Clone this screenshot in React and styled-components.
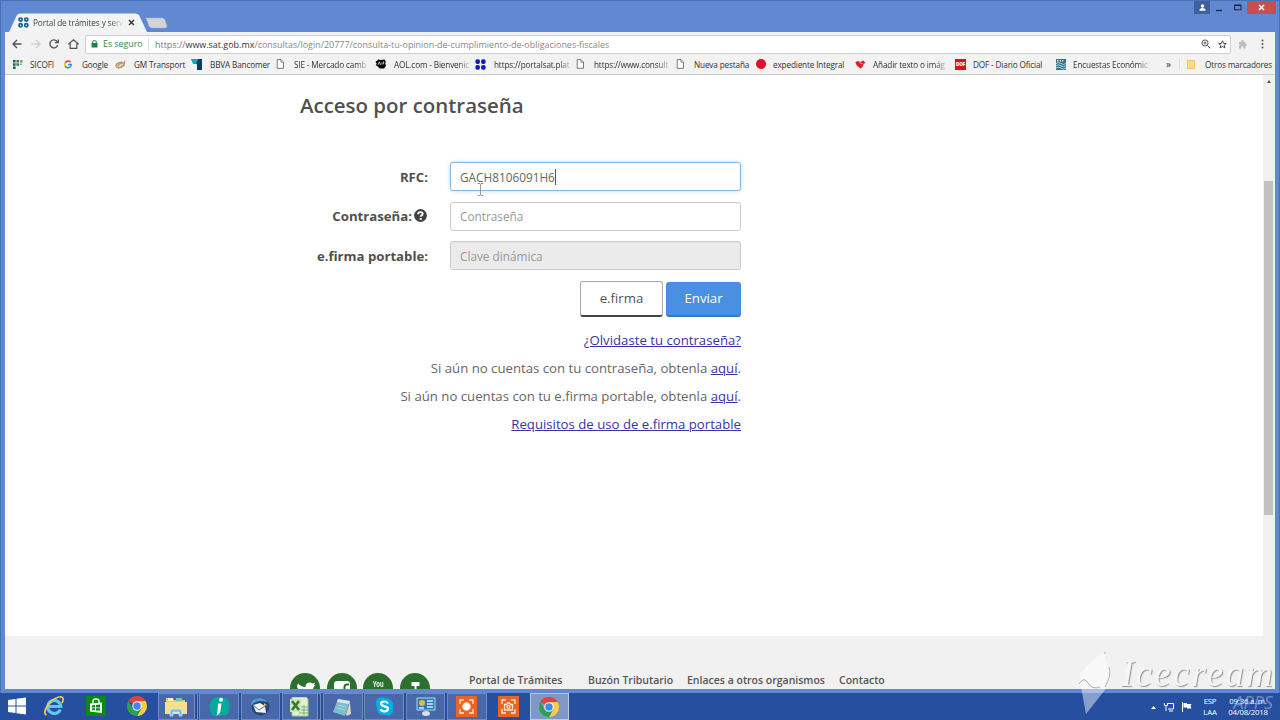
import React from "react";
import styled, { createGlobalStyle, css } from "styled-components";

const GlobalStyle = createGlobalStyle`
  * {
    box-sizing: border-box;
  }

  body {
    margin: 0;
    font-family: "Open Sans", sans-serif;
    overflow: hidden;
  }
`;

const DotsIcon = () => (
  <svg width="11" height="11" viewBox="0 0 12 12" fill="#1717c4">
    <rect x="0.4" y="0.4" width="5" height="5" rx="2" />
    <rect x="6.6" y="0.4" width="5" height="5" rx="2" />
    <rect x="0.4" y="6.6" width="5" height="5" rx="2" />
    <rect x="6.6" y="6.6" width="5" height="5" rx="2" />
  </svg>
);

const SatIcon = () => (
  <svg width="11" height="11" viewBox="0 0 11 11" fill="none" stroke="#1c5f8e" strokeWidth="1.7">
    <circle cx="2.6" cy="2.6" r="1.6" />
    <circle cx="8.3" cy="2.6" r="1.6" />
    <circle cx="2.6" cy="8.3" r="1.6" />
    <circle cx="8.3" cy="8.3" r="1.6" />
  </svg>
);

const PageIcon = () => (
  <svg width="9" height="10" viewBox="0 0 9 10" fill="#fff" stroke="#6b6b6b" strokeWidth="0.9">
    <path d="M1.2.6h3.8l2.5 2.5v6.2H1.2z" />
    <path d="M5 .6v2.5h2.5" />
  </svg>
);

const GoogleIcon = () => (
  <svg width="8" height="9" viewBox="0 0 10 10" fill="none" strokeWidth="2">
    <path d="M8.2 2.1A4 4 0 0 0 1.5 3.1" stroke="#ea4335" />
    <path d="M1.5 3.1a4 4 0 0 0 0 3.8" stroke="#fbbc05" />
    <path d="M1.5 6.9A4 4 0 0 0 7.8 7.9" stroke="#34a853" />
    <path d="M7.8 7.9A4 4 0 0 0 9 5H5" stroke="#4285f4" />
  </svg>
);

const SicofiIcon = () => (
  <svg width="10" height="9" viewBox="0 0 10 9">
    <path d="M0 0h2.6v2.6H0zM0 3.2h2.6v2.6H0zM0 6.4h2.6V9H0z" fill="#1d6444" />
    <path d="M3.4 0H6v2.6H3.4zM3.4 3.2H6v2.6H3.4z" fill="#2e8058" />
    <path d="M7.2.2h2.2v2.2H7.2zM7.2 3.6h1.4V5H7.2z" fill="#4b8f70" />
  </svg>
);

const GmIcon = () => (
  <svg width="11" height="9" viewBox="0 0 11 9" fill="none" stroke="#b59a61" strokeWidth="1.1">
    <ellipse cx="5" cy="5" rx="4.2" ry="2.6" transform="rotate(-18 5 5)" fill="#ddd3ba" />
    <path d="M2.6 6.2c1-2.8 3.4-3.3 5-2.8M3 7.8c4 .4 7-3 6.8-7" />
  </svg>
);

const BbvaIcon = () => (
  <svg width="11" height="11" viewBox="0 0 11 11">
    <path d="M0 0h11v11H6V5.4z" fill="#093e63" />
    <path d="M0 0h7L5 5H2z" fill="#1aa7b5" />
  </svg>
);

const AolIcon = () => (
  <svg width="12" height="10" viewBox="0 0 12 10">
    <path d="M.5 3 2 1.8 3.2.5l3 .6L9.6.6l1.2 2.2-.6 2 .9 1.8L9 9.5H4.6L2.6 7.2.7 6.3l1-1.6z" fill="#080808" />
    <path d="m3 5.8 1.4-3 1.2 3M7 3.3v2.4M8.6 2.4v2.8" stroke="#eee" strokeWidth=".8" fill="none" />
  </svg>
);

const ImageTextIcon = () => (
  <svg width="11" height="9" viewBox="0 0 11 9">
    <path d="M.3 2.3 3 1l2 1.1L8.3.4l2.4 2.7-2 .7-.9 2.7-2.3 2.1L1.9 5.8z" fill="#dd2027" />
    <path d="m4.8 2 .8 1.5 2.2.2" stroke="#fff" strokeWidth=".6" fill="none" />
  </svg>
);

const SurveyIcon = () => (
  <svg width="10" height="11" viewBox="0 0 10 11">
    <path d="M0 0h10v11H0z" fill="#39708a" />
    <path d="M1 1h1.5v1.5H1zM3.6 1H5v1.5H3.6zM6 1h1.4v1.5H6z" fill="#d7e5e8" />
    <path d="M0 4.5q2.5-2 5 0t5 0M0 6.8q2.5-2 5 0t5 0M0 9.1q2.5-2 5 0t5 0" stroke="#b3d5da" fill="none" />
  </svg>
);

const ChromeIcon = () => (
  <svg width="20" height="20" viewBox="0 0 20 20">
    <path d="M10 10 1.34 5A10 10 0 0 1 18.66 5z" fill="#dc4537" />
    <path d="M10 10V5h8.66A10 10 0 0 1 10 20l4.3-7.5z" fill="#fccd43" />
    <path d="M10 10l4.33 2.5L10 20A10 10 0 0 1 1.34 5l4.33 7.5z" fill="#2ba14b" />
    <circle cx="10" cy="10" r="4.8" fill="#f6f6f6" />
    <circle cx="10" cy="10" r="3.7" fill="#4285f4" />
  </svg>
);

const bookmarks = [
  { label: "SICOFI", width: 50.5, gap: 7, icon: <SicofiIcon /> },
  { label: "Google", width: 52.5, gap: 8.5, icon: <GoogleIcon /> },
  { label: "GM Transport", width: 76, icon: <GmIcon /> },
  { label: "BBVA Bancomer", width: 84, icon: <BbvaIcon /> },
  { label: "SIE - Mercado camb", width: 100, fade: true, icon: <PageIcon /> },
  { label: "AOL.com - Bienvenic", width: 100, fade: true, icon: <AolIcon /> },
  { label: "https://portalsat.plat", width: 100, fade: true, icon: <DotsIcon /> },
  { label: "https://www.consult", width: 100, fade: true, icon: <PageIcon /> },
  { label: "Nueva pestaña", width: 80, icon: <PageIcon /> },
  { label: "expediente Integral", width: 100, gap: 7, icon: "record" },
  { label: "Añadir texto o imág", width: 100, gap: 7, fade: true, icon: <ImageTextIcon /> },
  { label: "DOF - Diario Oficial", width: 100, gap: 7, icon: "dof" },
  { label: "Encuestas Económic", width: 106, gap: 7, fade: true, icon: <SurveyIcon /> },
];

const footerLinks = [
  ["Portal de Trámites", 119],
  ["Buzón Tributario", 99],
  ["Enlaces a otros organismos", 152],
  ["Contacto", 60],
];

const Browser = () => (
  <>
    <TabStrip>
      <Tab>
        <TabShape viewBox="0 0 139 19" preserveAspectRatio="none">
          <path d="M0 19 8 2Q9 .5 11 .5H126Q129 .5 130 2L138 19z" fill="#f2f3f3" />
        </TabShape>
        <SatIcon />
        <TabTitle>Portal de trámites y servic</TabTitle>
        <svg width="7" height="7" viewBox="0 0 7 7" stroke="#333" strokeWidth="1.4">
          <path d="m1 1 5 5M6 1 1 6" />
        </svg>
      </Tab>
      <svg width="23" height="12" viewBox="0 0 23 12">
        <path d="M1 1h16q2 0 3 2l2 6q0 2-2 2H7q-2 0-3-2z" fill="#d1d3d6" stroke="#a4afc4" strokeWidth=".5" />
      </svg>
      <WindowControls>
        <Control $kind="user">
          <svg width="7" height="7" viewBox="0 0 8 8" fill="#fff">
            <circle cx="4" cy="2.3" r="2" />
            <path d="M.5 7.6V6.5Q1 4.7 4 4.7t3.5 1.8v1.1z" />
          </svg>
        </Control>
        <Control>
          <svg width="7" height="8">
            <path d="M0 6.5h6" stroke="#15213d" strokeWidth="1.3" />
          </svg>
        </Control>
        <Control>
          <svg width="8" height="7">
            <path d="M.5 1H7v4.8H.5zM.5 1.5H7" stroke="#15213d" fill="none" />
          </svg>
        </Control>
        <Control $kind="close">
          <svg width="7" height="7" viewBox="0 0 7 7" stroke="#fff" strokeWidth="1.5">
            <path d="m1 1 5 5M6 1 1 6" />
          </svg>
        </Control>
      </WindowControls>
    </TabStrip>
    <Toolbar>
      <NavIcons>
        <svg width="10" height="10" viewBox="0 0 10 10" stroke="#555" strokeWidth="1.4">
          <path d="M9.5 5H1M5 1 1 5l4 4" />
        </svg>
        <svg width="10" height="10" viewBox="0 0 10 10" stroke="#cfcfcf" strokeWidth="1.4">
          <path d="M.5 5H9M5 1l4 4-4 4" />
        </svg>
        <svg width="10" height="10" viewBox="0 0 10 10" stroke="#555" strokeWidth="1.3">
          <path d="M8.7 6.2A4 4 0 1 1 7.9 2.2L9 3.3" />
          <path d="M6 3.6h3.3V.4" />
        </svg>
        <svg width="11" height="10" viewBox="0 0 11 10" stroke="#555" strokeWidth="1.2">
          <path d="M.7 5 5.5.8 10.3 5H8.8v4.3H2.2V5z" />
        </svg>
      </NavIcons>
      <AddressBar>
        <svg width="7" height="8" viewBox="0 0 7 8">
          <path d="M.5 3h6v4.5h-6z" fill="#13854a" />
          <path d="M1.7 3V2a1.8 1.5 0 0 1 3.6 0v1" fill="none" stroke="#13854a" />
        </svg>
        <Secure>Es seguro</Secure>
        <Url>
          https://<b>www.sat.gob.mx</b>
          <span>/consultas/login/20777/consulta-tu-opinion-de-cumplimiento-de-obligaciones-fiscales</span>
        </Url>
        <svg width="10" height="10" viewBox="0 0 10 10" fill="none" stroke="#555">
          <circle cx="4" cy="4" r="3.1" />
          <path d="m6.3 6.3 3 3M2.5 4h3M4 2.5v3" />
        </svg>
        <svg width="9" height="9" viewBox="0 0 10 10" fill="none" stroke="#444" strokeWidth="1.1">
          <path d="m5 .9 1.2 2.8 3 .2-2.3 1.9.8 3L5 7.2 2.3 8.8l.8-3L.8 3.9l3-.2z" />
        </svg>
      </AddressBar>
      <ToolbarEnd>
        <svg width="9" height="9" viewBox="0 0 9 9" fill="#bdbdbd">
          <path d="M1 2h2.3V1a1.1 1.1 0 0 1 2.2 0v1h2v2.1h.4a1 1 0 0 1 0 2h-.4v2.4H5.2V7.3a1 1 0 0 0-2 0v1.2H1V6.2a1.2 1.2 0 0 0 0-2.2z" />
        </svg>
        <svg width="3" height="10" fill="#555">
          <circle cx="1.5" cy="1.5" r="1" />
          <circle cx="1.5" cy="5" r="1" />
          <circle cx="1.5" cy="8.5" r="1" />
        </svg>
      </ToolbarEnd>
    </Toolbar>
    <BookmarkBar>
      {bookmarks.map(({ label, width, gap, fade, icon }) => (
        <Bookmark key={label} $width={width} $gap={gap}>
          <BookmarkIcon>
            {icon === "record" ? <RecordIcon /> : icon === "dof" ? <DofIcon>DOF</DofIcon> : icon}
          </BookmarkIcon>
          <BookmarkText $fade={fade}>{label}</BookmarkText>
        </Bookmark>
      ))}
      <Overflow>»</Overflow>
      <OtherBookmarks>
        <Folder />
        Otros marcadores
      </OtherBookmarks>
    </BookmarkBar>
  </>
);

const AccessForm = () => (
  <FormArea>
    <Title>Acceso por contraseña</Title>
    <Fields>
      <Field>
        <Label>RFC:</Label>
        <Input $focused>
          GACH8106091H6
          <Caret />
          <MousePointer viewBox="0 0 7 13" fill="none" stroke="#999">
            <path d="M.5.5H3l.5.5.5-.5h2.5M3.5 1v11M.5 12.5H3l.5-.5.5.5h2.5" />
          </MousePointer>
        </Input>
      </Field>
      <Field>
        <Label $help>
          Contraseña:
          <svg width="13" height="13" viewBox="0 0 13 13">
            <circle cx="6.5" cy="6.5" r="6.4" fill="#414141" />
            <path d="M4.2 5.2V4.7Q4.4 3.1 6.5 3.1t2.2 1.7Q8.7 6 7.5 6.5q-.8.4-.8 1.3" fill="none" stroke="#fff" strokeWidth="1.9" />
            <path d="M5.7 9h2v1.9h-2z" fill="#fff" />
          </svg>
        </Label>
        <Input $placeholder>Contraseña</Input>
      </Field>
      <Field>
        <Label>e.firma portable:</Label>
        <Input $placeholder $disabled>Clave dinámica</Input>
      </Field>
    </Fields>
    <Actions>
      <Button type="button">e.firma</Button>
      <Button type="button" $primary>Enviar</Button>
    </Actions>
    <Help>
      <p><a>¿Olvidaste tu contraseña?</a></p>
      <p>Si aún no cuentas con tu contraseña, obtenla <a>aquí</a>.</p>
      <p>Si aún no cuentas con tu e.firma portable, obtenla <a>aquí</a>.</p>
      <p><a>Requisitos de uso de e.firma portable</a></p>
    </Help>
  </FormArea>
);

const PageFooter = () => (
  <Footer>
    <Social>
      <SocialCircle>
        <svg width="30" height="30" viewBox="0 0 30 30" fill="#fff">
          <path d="M8 10.5q3.5 3.5 7.5 3.5 0-4.5 4.5-4.5 1.5 0 2.5 1l2.5-.8-1 2.3 1.5.3-2 2q-1 9-9 10-5 0-8-2.5 4 0 5-1.5-3-.8-3.5-3h2q-3-1.500-3-4.200z" />
        </svg>
      </SocialCircle>
      <SocialCircle>
        <svg width="30" height="30" viewBox="0 0 30 30">
          <rect x="7" y="8" width="16" height="16" rx="3" fill="#fff" />
          <path d="M22 11.5h-2q-2.500 0-2.500 2.500v9m-2.500-6h6" stroke="#2b6d2c" strokeWidth="2" fill="none" />
        </svg>
      </SocialCircle>
      <SocialCircle><YouText>You</YouText></SocialCircle>
      <SocialCircle>
        <svg width="30" height="30" viewBox="0 0 30 30" fill="#fff">
          <path d="M11.5 9h8v4h-3v3h7v4h-2v-2h-12v2h-2v-4h7v-3h-3z" />
        </svg>
      </SocialCircle>
    </Social>
    {footerLinks.map(([label, width]) => (
      <FooterLink key={label} $width={width}>{label}</FooterLink>
    ))}
  </Footer>
);

const WindowsIcon = () => (
  <svg width="18" height="18" viewBox="0 0 18 18" fill="#fff">
    <path d="m0 3 7.5-1v6.5H0zM8.5 1.8 18 .5v8H8.5zM0 9.5h7.5V16L0 15zM8.5 9.5H18v8l-9.500-1.300z" />
  </svg>
);

const IeIcon = () => (
  <svg width="22" height="20" viewBox="0 0 22 20" fill="none">
    <path d="M17.3 13.5A6.5 6.5 0 1 1 17.8 10.5H6" stroke="#60c9f1" strokeWidth="3.2" />
    <path d="M3.5 19C-2 17 7 3 16 1c6-1 4 4 3 6" stroke="#efca4b" strokeWidth="1.7" />
  </svg>
);

const StoreIcon = () => (
  <svg width="20" height="20" viewBox="0 0 20 20">
    <path d="M0 0h20v20H0z" fill="#098b12" />
    <path d="m4 7.5 12-1v10.500L4 15.500z" fill="#fff" />
    <path d="M7 7V5q0-2 3-2t3 2v2" stroke="#fff" strokeWidth="1.4" fill="none" />
    <path d="m6 9.300 3-.3V11.500H6zM10 9l4-.5v3h-4zM6 12.300h3v2H6zM10 12.300h4v2.300h-4z" fill="#098b12" />
  </svg>
);

const FolderIcon = () => (
  <svg width="22" height="21" viewBox="0 0 22 21">
    <path d="M1 2h7l1 2h11v14H1z" fill="#edc95f" />
    <path d="M3 2h5v3H3z" fill="#fff4bd" />
    <path d="M11 2h6v3h-6z" fill="#7fc0b0" />
    <path d="M0 6h22v12H0z" fill="#f7e08d" />
    <path d="M5 20v-4q0-3 3-3h6q3 0 3 3v4h-3v-4H8v4z" fill="#72bfe7" stroke="#d9f0f7" strokeWidth=".7" />
  </svg>
);

const InfoIcon = () => (
  <svg width="21" height="21" viewBox="0 0 21 21">
    <path d="M2 5q4-5 10-4l7 2q3 8 0 15-8 4-16 1Q-1 12 2 5z" fill="#03a99b" />
    <circle cx="12" cy="3.8" r="2" fill="#fff" />
    <path d="M9 7.5h3.5l-1 7q-.5 3.500-4 5l1-4z" fill="#fff" />
  </svg>
);

const ThunderbirdIcon = () => (
  <svg width="20" height="20" viewBox="0 0 20 20">
    <circle cx="10.5" cy="9.5" r="9" fill="#244875" />
    <path d="M3 3q9-5 15 2-4-1-8-1-5 0-9 5 0-4 2-6z" fill="#4e9bd2" />
    <path d="m3 8 7-2 5 3 1 7-10-1z" fill="#f1f3f5" />
    <path d="m3 8 6 5 6-4" stroke="#7b6c66" fill="none" />
    <path d="m14 6 3 2-3 1z" fill="#e8b565" />
  </svg>
);

const ExcelIcon = () => (
  <svg width="21" height="20" viewBox="0 0 21 20">
    <path d="M3 0h14l2 2v17H3z" fill="#e2f1d4" stroke="#9cc48a" />
    <path d="M10 10h9m-9 3h9m-9 3h9M15 8v10" stroke="#7cad6c" />
    <path d="M1 2h11v13H1z" fill="#cfe6c0" />
    <path d="m3 4 7 9M10 4l-7 9" stroke="#2e7d38" strokeWidth="2.6" />
  </svg>
);

const NotesIcon = () => (
  <svg width="21" height="20" viewBox="0 0 21 20">
    <path d="m6 2 12 2-5 15-12-4z" fill="#7ebdce" />
    <path d="m6 2 12 2-1 3L5 5z" fill="#d8e8eb" />
    <path d="m14 17 4-12 1 12-4 2z" fill="#ded2c5" />
    <path d="m6 8 8 2m-9 1 8 2" stroke="#a5d4df" />
  </svg>
);

const SkypeIcon = () => (
  <svg width="19" height="19" viewBox="0 0 19 19">
    <path d="M5 .5q3-.5 5 .5 8 0 8 8 0 1.5-.3 2 1.3 3-.7 5.5-3 3-6 1.5-9 1-9.5-8 0-1-.3-1.5Q0 2 5 .5z" fill="#00aee9" />
    <path d="M13 6.5Q12 4.5 9.5 4.5q-3.5 0-3.5 2.3 0 1.9 3.5 2.500t3.500 2.500q0 2.500-3.500 2.500-3 0-4-2" fill="none" stroke="#fff" strokeWidth="2.2" />
  </svg>
);

const ControlIcon = () => (
  <svg width="20" height="19" viewBox="0 0 20 19">
    <path d="M1 1h18v12H1z" fill="#277abb" stroke="#b6d6e6" />
    <circle cx="6" cy="6" r="3" fill="#e8b44b" />
    <path d="M11 4h6M11 7h6M11 10h6M3 11h5" stroke="#d9eefa" strokeWidth="1.3" />
    <ellipse cx="10" cy="16.5" rx="4" ry="2.5" fill="#d9dfe2" />
  </svg>
);

const CaptureIcon = ({ camera }) => (
  <svg width="21" height="21" viewBox="0 0 21 21" fill="none" stroke="#ffe3cd" strokeWidth="1.3">
    <path d="M0 0h21v21H0z" fill="#e86625" stroke="none" />
    <path d="M4 8V4h4M13 4h4v4M17 13v4h-4M8 17H4v-4" />
    {camera ? (
      <>
        <path d="M6.5 8.5h2l1-1.5h2l1 1.5h2V14h-8z" />
        <circle cx="10.5" cy="11" r="1.5" />
      </>
    ) : (
      <circle cx="10.5" cy="10.5" r="3.6" fill="#fff" />
    )}
  </svg>
);

const tasks = [
  { icon: <FolderIcon />, framed: true, stacked: true },
  { icon: <InfoIcon />, framed: true },
  { icon: <ThunderbirdIcon />, framed: true },
  { icon: <ExcelIcon />, framed: true, stacked: true },
  { icon: <NotesIcon />, framed: true },
  { icon: <SkypeIcon />, framed: true },
  { icon: <ControlIcon />, framed: true },
  { icon: <CaptureIcon />, framed: true },
  { icon: <CaptureIcon camera /> },
  { icon: <ChromeIcon />, framed: true, active: true },
];

const Taskbar = () => (
  <TaskbarRow>
    <Launcher $width={33}><WindowsIcon /></Launcher>
    <Launcher $width={42}><IeIcon /></Launcher>
    <Launcher $width={41}><StoreIcon /></Launcher>
    <Launcher $width={42}><ChromeIcon /></Launcher>
    <TaskList>
      {tasks.map((task, index) => (
        <TaskButton key={index} $framed={task.framed} $stacked={task.stacked} $active={task.active}>
          {task.icon}
        </TaskButton>
      ))}
    </TaskList>
    <Tray>
      <svg width="5" height="3"><path d="m0 3 2.5-3L5 3z" fill="#fff" /></svg>
      <svg width="10" height="10" viewBox="0 0 10 10" fill="none" stroke="#fff">
        <path d="M4 1.5h5.5v5.5H4M5 9h4M.5 1v2.500h3V1M2 4v5" />
      </svg>
      <svg width="10" height="10" viewBox="0 0 10 10" fill="#fff">
        <path d="M0 0h1v10H0zM1.500 1H5v1h4.500L8.500 4l1 2.500H5V5.500H1.500z" />
      </svg>
      <TrayText $width={16}>ESP<br />LAA</TrayText>
      <TrayText $width={40}>09:36 a. m.<br />04/08/2018</TrayText>
    </Tray>
  </TaskbarRow>
);

const App = () => (
  <Desktop>
    <GlobalStyle />
    <Window>
      <Browser />
      <Viewport>
        <Page>
          <AccessForm />
          <PageFooter />
        </Page>
        <Scrollbar>
          <ScrollArrow />
          <ScrollThumb />
        </Scrollbar>
      </Viewport>
    </Window>
    <Taskbar />
    <Watermark>
      <svg width="36" height="64" viewBox="0 0 36 64">
        <path d="M1 30Q3 14 27 1q-1 7 4 14t-1 20L8 63 3 36z" fill="#fff" fillOpacity=".5" />
        <path d="M1 33q5-8 9-1t12 4M31 16q3 8-4 20M27 1v2" fill="none" stroke="#666" strokeWidth=".8" strokeOpacity=".7" />
      </svg>
      <Brand>
        <BrandName>Icecream</BrandName>
        <BrandApps>APPS</BrandApps>
      </Brand>
    </Watermark>
  </Desktop>
);

export default App;

// Styled components

const Desktop = styled.div`
  position: relative;
  display: flex;
  flex-direction: column;
  width: 1280px;
  height: 720px;
  overflow: hidden;
  background: #6189d2;

  svg {
    flex-shrink: 0;
  }
`;

const Window = styled.main`
  display: flex;
  flex-direction: column;
  height: 693px;
  padding: 0 4px 4px;
  border: 1px solid #4672b5;
  border-bottom: 0;
`;

const TabStrip = styled.div`
  display: flex;
  align-items: flex-end;
  height: 31px;
  flex-shrink: 0;
  padding-left: 4px;

  > svg {
    margin-bottom: 3px;
  }
`;

const Tab = styled.div`
  position: relative;
  display: flex;
  align-items: center;
  width: 136px;
  height: 19px;
  padding-left: 9px;
`;

const TabShape = styled.svg`
  position: absolute;
  inset: 0;
  width: 139px;
  height: 19px;

  ~ * {
    position: relative;
  }
`;

const TabTitle = styled.span`
  width: 90px;
  margin: 0 5px 0 4px;
  white-space: nowrap;
  font-size: 8.2px;
  color: #444;
  letter-spacing: -0.1px;
  mask-image: linear-gradient(to right, #000 85%, transparent 102%);
`;

const WindowControls = styled.div`
  display: flex;
  align-self: flex-start;
  height: 13px;
  margin-left: auto;
  margin-right: -1px;
`;

const controlWidths = { user: "16px", close: "29px" };
const controlColors = { user: "#3e609f", close: "#c84e50" };

const Control = styled.div`
  display: grid;
  place-items: center;
  width: ${({ $kind }) => controlWidths[$kind] || "18.5px"};
  background: ${({ $kind }) => controlColors[$kind] || "transparent"};
`;

const Toolbar = styled.div`
  display: flex;
  align-items: center;
  height: 24px;
  flex-shrink: 0;
  padding-left: 7px;
  background: #f2f2f2;
`;

const NavIcons = styled.div`
  display: flex;
  align-items: center;
  gap: 8.6px;
  width: 73px;
  fill: none;
`;

const AddressBar = styled.div`
  display: flex;
  align-items: center;
  width: 1146px;
  height: 19px;
  padding: 0 3px 0 5px;
  background: #fff;
  border: 1px solid #cfcfcf;
  border-radius: 2px;

  > svg:nth-last-child(2) {
    margin-left: auto;
    margin-right: 7px;
  }
`;

const Secure = styled.span`
  display: flex;
  align-items: center;
  height: 12px;
  width: 46px;
  margin-left: 5px;
  border-right: 1px solid #ddd;
  color: #328b48;
  font-size: 8.8px;
  white-space: nowrap;
`;

const Url = styled.span`
  margin-left: 6px;
  font-size: 8.95px;
  color: #777;
  white-space: nowrap;

  b {
    font-weight: 400;
    color: #333;
  }

  span {
    color: #888;
  }
`;

const ToolbarEnd = styled.div`
  display: flex;
  align-items: center;
  justify-content: space-between;
  width: 26px;
  margin-left: 7px;
`;

const BookmarkBar = styled.div`
  display: flex;
  align-items: center;
  height: 19px;
  flex-shrink: 0;
  padding: 0 0 2px 7px;
  background: #f2f2f2;
  border-bottom: 1px solid #c9c9c9;
  font-size: 8.2px;
  letter-spacing: -0.15px;
  color: #333;
`;

const Bookmark = styled.div`
  display: flex;
  align-items: center;
  gap: ${({ $gap = 8 }) => $gap}px;
  width: ${({ $width }) => $width}px;
  flex-shrink: 0;
`;

const BookmarkIcon = styled.span`
  display: flex;
  justify-content: center;
  width: 11px;
  flex-shrink: 0;
`;

const BookmarkText = styled.span`
  white-space: nowrap;
  ${({ $fade }) =>
    $fade &&
    css`
      mask-image: linear-gradient(to right, #000 86%, transparent 105%);
    `}
`;

const RecordIcon = styled.i`
  width: 10px;
  height: 10px;
  border-radius: 50%;
  background: #e50a25;
`;

const DofIcon = styled.span`
  width: 11px;
  height: 11px;
  background: #dd1117;
  color: #fff;
  font-size: 4.6px;
  font-weight: 800;
  line-height: 11px;
  text-align: center;
`;

const Overflow = styled.span`
  width: 18px;
  padding-left: 5px;
  font-size: 10px;
`;

const OtherBookmarks = styled.span`
  display: flex;
  align-items: center;
  height: 12px;
  gap: 10px;
  padding-left: 7px;
  border-left: 1px solid #ddd;
  white-space: nowrap;
`;

const Folder = styled.i`
  width: 8px;
  height: 9px;
  background: #f9dd82;
  border: 1px solid #e9ca68;
`;

const Viewport = styled.div`
  display: flex;
  flex: 1;
  min-height: 0;
  overflow: hidden;
  background: #fff;
`;

const Page = styled.div`
  display: flex;
  flex-direction: column;
  width: 1258px;
  flex-shrink: 0;
`;

const FormArea = styled.form`
  height: 561px;
  flex-shrink: 0;
  width: 736px;
  padding-top: 15px;
  color: #505050;
`;

const Title = styled.h1`
  margin: 0 0 42px 295px;
  font-size: 20.45px;
  line-height: 30px;
  font-weight: 600;
`;

const Fields = styled.div`
  display: flex;
  flex-direction: column;
  gap: 10.5px;
`;

const Field = styled.div`
  display: flex;
  align-items: center;
  justify-content: flex-end;
  gap: 22px;
`;

const Label = styled.label`
  display: flex;
  align-items: center;
  gap: 2px;
  margin-right: ${({ $help }) => ($help ? "1px" : 0)};
  font-size: 13.2px;
  font-weight: 700;

  svg {
    margin-top: -2px;
  }
`;

const Input = styled.div`
  position: relative;
  display: flex;
  align-items: center;
  width: 291px;
  height: 29px;
  padding: 0 9px;
  border: 1px solid ${({ $focused }) => ($focused ? "#83b8df" : "#ccc")};
  border-radius: 3px;
  background: ${({ $disabled }) => ($disabled ? "#ebebeb" : "#fff")};
  box-shadow: ${({ $focused }) => ($focused ? "0 0 4px #b5d9f3" : "inset 0 1px 1px #00000008")};
  color: ${({ $placeholder }) => ($placeholder ? "#999" : "#666")};
  font-size: 11.8px;
`;

const Caret = styled.i`
  width: 1px;
  height: 16px;
  background: #555;
`;

const MousePointer = styled.svg`
  position: absolute;
  left: 26px;
  top: 20px;
  width: 7px;
  height: 13px;
`;

const Actions = styled.div`
  display: flex;
  justify-content: flex-end;
  align-items: flex-end;
  gap: 3px;
  margin-top: 10.5px;
`;

const Button = styled.button`
  width: ${({ $primary }) => ($primary ? "75px" : "83px")};
  height: ${({ $primary }) => ($primary ? "35px" : "36px")};
  padding: 0 0 1px;
  border: 1px solid ${({ $primary }) => ($primary ? "#468cdc" : "#aaa")};
  border-bottom: 2px solid ${({ $primary }) => ($primary ? "#3977bf" : "#444")};
  border-radius: 3px;
  background: ${({ $primary }) => ($primary ? "#4a90e2" : "#fff")};
  color: ${({ $primary }) => ($primary ? "#fff" : "#555")};
  font: 13.2px "Open Sans", sans-serif;
`;

const Help = styled.div`
  padding-top: 9px;
  text-align: right;
  font-size: 13.2px;
  line-height: 28px;
  white-space: nowrap;
  color: #666;

  p {
    margin: 0;
  }

  a {
    color: #3b32a8;
    text-decoration: underline;
  }
`;

const Footer = styled.footer`
  display: flex;
  height: 55px;
  flex-shrink: 0;
  padding: 37px 0 0 285px;
  background: #f1f1f1;
`;

const Social = styled.div`
  display: flex;
  gap: 6.5px;
  width: 179px;
`;

const SocialCircle = styled.span`
  display: flex;
  justify-content: center;
  width: 30px;
  height: 30px;
  border-radius: 50%;
  background: #2d6f2d;
  color: #fff;
`;

const YouText = styled.span`
  font: 700 9px/23px "Liberation Sans", sans-serif;
  transform: scaleX(0.65);
`;

const FooterLink = styled.a`
  width: ${({ $width }) => $width}px;
  font: 600 10.5px/15px "Open Sans", sans-serif;
  white-space: nowrap;
  color: #555;
`;

const Scrollbar = styled.div`
  width: 12px;
  background: #f0f0f0;
`;

const ScrollArrow = styled.div`
  width: 0;
  margin: 5px auto 98px;
  border: 2.5px solid transparent;
  border-top: 0;
  border-bottom: 3px solid #555;
`;

const ScrollThumb = styled.div`
  height: 334px;
  margin: 0 2px 0 1px;
  background: #c1c1c1;
`;

const TaskbarRow = styled.div`
  display: flex;
  height: 27px;
  align-items: flex-start;
  background: #264f9f;
`;

const Launcher = styled.div`
  display: grid;
  place-items: center;
  width: ${({ $width }) => $width}px;
  height: 26px;
  flex-shrink: 0;
`;

const TaskList = styled.div`
  display: flex;
  gap: 1.8px;
`;

const TaskButton = styled.div`
  display: grid;
  place-items: center;
  width: 39.5px;
  height: 27px;
  border: 1px solid ${({ $framed, $active }) => ($active ? "#b8c8e5" : $framed ? "#718bc0" : "transparent")};
  background: ${({ $framed, $active }) => ($active ? "#8098c7" : $framed ? "#4868aa" : "transparent")};
  ${({ $stacked }) =>
    $stacked &&
    css`
      padding-right: 4px;
      box-shadow: inset -3px 0 0 -1px #294f9a, inset -4px 0 0 -1px #748fc3;
    `}
`;

const Tray = styled.div`
  display: flex;
  align-items: center;
  gap: 8px;
  height: 28px;
  margin: 0 12px 0 auto;
`;

const TrayText = styled.span`
  width: ${({ $width }) => $width}px;
  margin-left: 2px;
  color: #fff;
  text-align: center;
  white-space: nowrap;
  font-size: 7.8px;
  line-height: 11px;
  letter-spacing: -0.2px;
`;

const Watermark = styled.div`
  position: absolute;
  display: flex;
  right: 5px;
  bottom: 5px;
  width: 197px;
  opacity: 0.9;
`;

const Brand = styled.div`
  display: flex;
  flex-direction: column;
  align-items: flex-end;
  width: 161px;
  padding-top: 3px;
`;

const BrandName = styled.span`
  height: 39px;
  font: italic 400 37px/39px "Liberation Serif", serif;
  letter-spacing: 2.2px;
  color: #f7f7f7;
  text-shadow: 1px 1px 1px #888;
`;

const BrandApps = styled.span`
  margin-right: 2px;
  color: #ffffff28;
  text-shadow: 0 0 1px #ffffff50;
  font: italic 18px/18px "Open Sans", sans-serif;
`;
